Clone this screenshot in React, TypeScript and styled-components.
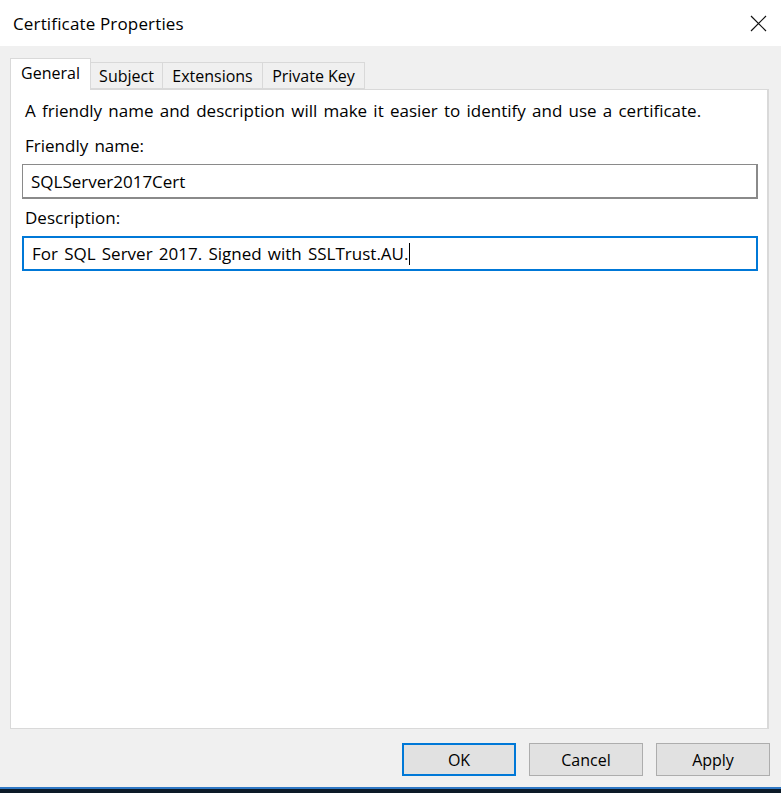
import styled, { createGlobalStyle } from 'styled-components';

const GlobalStyle = createGlobalStyle`
  html, body {
    margin: 0;
    padding: 0;
    background: #f0f0f0;
  }
  * {
    box-sizing: border-box;
  }
`;

const Window = styled.div`
  width: 781px;
  height: 793px;
  display: flex;
  flex-direction: column;
  font-family: "Open Sans", "Noto Sans", sans-serif;
  font-size: 16px;
  color: #000;
  overflow: hidden;
`;

const TitleBar = styled.header`
  height: 46px;
  flex-shrink: 0;
  background: #fff;
  display: flex;
  align-items: center;
  justify-content: space-between;
  padding: 0 14px 0 13px;
  font-size: 17px;
  letter-spacing: 0.15px;
`;

const CloseButton = styled.button`
  width: 18px;
  height: 18px;
  padding: 0;
  border: 0;
  background: transparent;
  display: flex;
  align-items: center;
  justify-content: center;
`;

const Body = styled.main`
  flex: 1;
  display: flex;
  flex-direction: column;
  padding: 12px 12px 0 10px;
  background: #f0f0f0;
`;

const TabStrip = styled.div`
  height: 31px;
  display: flex;
  align-items: flex-end;
  position: relative;
  z-index: 1;
`;

const Tab = styled.div<{ $active?: boolean; $width: number }>`
  width: ${({ $width }) => $width}px;
  height: ${({ $active }) => ($active ? 32 : 27)}px;
  margin-bottom: ${({ $active }) => ($active ? -1 : 0)}px;
  background: ${({ $active }) => ($active ? '#fff' : '#f0f0f0')};
  border: 1px solid #d9d9d9;
  border-bottom: ${({ $active }) => ($active ? 'none' : '1px solid #d9d9d9')};
  display: flex;
  align-items: center;
  justify-content: center;
  padding-bottom: ${({ $active }) => ($active ? 4 : 0)}px;
  & + & {
    border-left: none;
  }
`;

const Panel = styled.section`
  height: 640px;
  background: #fff;
  border: 1px solid #d9d9d9;
  border-right-width: 2px;
  padding: 10px 9px 0 11px;
  font-size: 17px;
  word-spacing: 1.8px;
`;

const Intro = styled.p`
  margin: 0 0 0 3px;
  line-height: 22px;
`;

const FieldLabel = styled.label<{ $gap: number }>`
  display: block;
  margin: ${({ $gap }) => $gap}px 0 7px 3px;
  line-height: 22px;
`;

const TextBox = styled.div<{ $focused?: boolean }>`
  height: 35px;
  border: 2px solid ${({ $focused }) => ($focused ? '#0078d7' : '#8a8a8a')};
  border-width: ${({ $focused }) => ($focused ? '2px' : '1px 2px 2px 1px')};
  padding-left: 8px;
  display: flex;
  align-items: center;
  background: #fff;
  white-space: pre;
`;

const Caret = styled.span`
  display: inline-block;
  width: 1px;
  height: 22px;
  background: #000;
  margin-left: 1px;
`;

const Footer = styled.footer`
  height: 58px;
  display: flex;
  justify-content: flex-end;
  align-items: flex-start;
  gap: 13px;
  padding: 14px 0 0 0;
  margin-right: -1px;
`;

const DialogButton = styled.button<{ $primary?: boolean }>`
  width: 114px;
  height: 33px;
  background: #e1e1e1;
  border: ${({ $primary }) => ($primary ? '2px solid #0078d7' : '1px solid #adadad')};
  font-family: inherit;
  font-size: 16px;
  color: #000;
`;

const Taskbar = styled.div`
  height: 6px;
  flex-shrink: 0;
  border-top: 2px solid #2f78c5;
  background: #0c1a28;
`;

const tabs = [
  { label: 'General', width: 81 },
  { label: 'Subject', width: 72 },
  { label: 'Extensions', width: 100 },
  { label: 'Private Key', width: 102 },
];

function App(): JSX.Element {
  return (
    <>
      <GlobalStyle />
      <Window>
        <TitleBar>
          <span>Certificate Properties</span>
          <CloseButton aria-label="Close">
            <svg width="17" height="17" viewBox="0 0 17 17">
              <path d="M1 1 L16 16 M16 1 L1 16" stroke="#111" strokeWidth="1.2" fill="none" />
            </svg>
          </CloseButton>
        </TitleBar>
        <Body>
          <TabStrip>
            {tabs.map((t, i) => (
              <Tab key={t.label} $active={i === 0} $width={t.width}>
                {t.label}
              </Tab>
            ))}
          </TabStrip>
          <Panel>
            <Intro>A friendly name and description will make it easier to identify and use a certificate.</Intro>
            <FieldLabel $gap={13}>Friendly name:</FieldLabel>
            <TextBox>SQLServer2017Cert</TextBox>
            <FieldLabel $gap={8}>Description:</FieldLabel>
            <TextBox $focused>
              For SQL Server 2017. Signed with SSLTrust.AU.
              <Caret />
            </TextBox>
          </Panel>
          <Footer>
            <DialogButton $primary>OK</DialogButton>
            <DialogButton>Cancel</DialogButton>
            <DialogButton>Apply</DialogButton>
          </Footer>
        </Body>
        <Taskbar />
      </Window>
    </>
  );
}

export default App;
